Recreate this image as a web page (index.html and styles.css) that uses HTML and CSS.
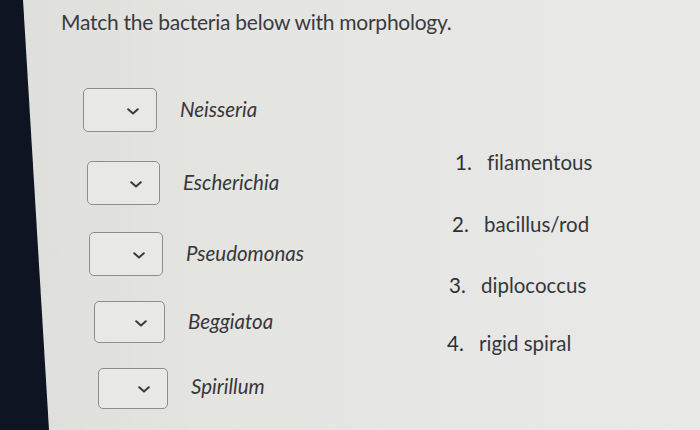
FILE: index.html
```html
<!DOCTYPE html>
<html lang="en">
<head>
<meta charset="utf-8">
<title>Match the bacteria</title>
<link rel="stylesheet" href="styles.css">
</head>
<body>
<div class="page">
  <div class="bezel"></div>
  <div class="content">
    <h1 class="title">Match the bacteria below with morphology.</h1>
    <div class="match">
      <div class="prompts">
        <div class="row">
          <div class="select"><svg class="chev" width="12" height="7" viewBox="0 0 12 7"><path d="M1.2 1.2 L6 5.6 L10.8 1.2" /></svg></div>
          <span class="label">Neisseria</span>
        </div>
        <div class="row">
          <div class="select"><svg class="chev" width="12" height="7" viewBox="0 0 12 7"><path d="M1.2 1.2 L6 5.6 L10.8 1.2" /></svg></div>
          <span class="label">Escherichia</span>
        </div>
        <div class="row">
          <div class="select"><svg class="chev" width="12" height="7" viewBox="0 0 12 7"><path d="M1.2 1.2 L6 5.6 L10.8 1.2" /></svg></div>
          <span class="label">Pseudomonas</span>
        </div>
        <div class="row">
          <div class="select"><svg class="chev" width="12" height="7" viewBox="0 0 12 7"><path d="M1.2 1.2 L6 5.6 L10.8 1.2" /></svg></div>
          <span class="label">Beggiatoa</span>
        </div>
        <div class="row">
          <div class="select"><svg class="chev" width="12" height="7" viewBox="0 0 12 7"><path d="M1.2 1.2 L6 5.6 L10.8 1.2" /></svg></div>
          <span class="label">Spirillum</span>
        </div>
      </div>
      <ol class="answers">
        <li class="answer"><span class="num">1.</span><span class="text">filamentous</span></li>
        <li class="answer"><span class="num">2.</span><span class="text">bacillus/rod</span></li>
        <li class="answer"><span class="num">3.</span><span class="text">diplococcus</span></li>
        <li class="answer"><span class="num">4.</span><span class="text">rigid spiral</span></li>
      </ol>
    </div>
  </div>
</div>
</body>
</html>
```

FILE: styles.css
```css
* { box-sizing: border-box; }
html, body { margin: 0; padding: 0; }
body {
  font-family: Lato, "Open Sans", "Liberation Sans", sans-serif;
  color: #35363a;
  font-variant-ligatures: none;
}
.page {
  position: relative;
  width: 700px;
  height: 430px;
  overflow: hidden;
  background: linear-gradient(90deg, #dededb 0%, #e4e4e1 30%, #e9e9e8 100%);
}
.bezel {
  position: absolute;
  left: 0;
  top: 0;
  width: 52px;
  height: 100%;
  background: #0e1422;
  clip-path: polygon(0 0, 23px 0, 49px 100%, 0 100%);
}
.content {
  padding: 9px 0 0 61px;
}
.title {
  margin: 0;
  font-size: 21px;
  letter-spacing: -0.25px;
  font-weight: 400;
  line-height: 26px;
  color: #3a3b3f;
}
.match {
  display: flex;
  align-items: flex-start;
}
.prompts {
  width: 386px;
  padding: 25px 0 0 22px;
  display: flex;
  flex-direction: column;
}
.row {
  display: flex;
  align-items: center;
  gap: 23px;
  height: 44px;
}
.row:nth-child(1) { margin-top: 28px; }
.row:nth-child(2) { margin-top: 29px; margin-left: 4px; }
.row:nth-child(3) { margin-top: 27px; margin-left: 6px; }
.row:nth-child(4) { margin-top: 24px; margin-left: 11px; }
.row:nth-child(5) { margin-top: 22px; margin-left: 15px; }
.select {
  flex: none;
  width: 74px;
  height: 44px;
  border: 1.5px solid #8d8d8b;
  border-radius: 5px;
  background: #e8e8e6;
  display: flex;
  align-items: center;
  justify-content: flex-end;
  padding-right: 17px;
}
.row:nth-child(2) .select { width: 73px; }
.row:nth-child(4) .select { width: 71px; height: 42px; }
.row:nth-child(5) .select { width: 70px; height: 41px; }
.chev { display: block; margin-top: 2px; }
.chev path {
  fill: none;
  stroke: #3b3c40;
  stroke-width: 2;
  stroke-linecap: round;
  stroke-linejoin: round;
}
.label {
  font-style: italic;
  font-size: 20.5px;
  color: #36373b;
  margin-top: -3px;
}
.row:nth-child(5) .label { margin-top: -5px; }
.answers {
  list-style: none;
  margin: 0;
  padding: 115px 0 0 0;
  display: flex;
  flex-direction: column;
}
.answer {
  display: flex;
  align-items: center;
  height: 24px;
  font-size: 20.5px;
  color: #36373b;
}
.answer:nth-child(1) { margin-left: 8px; }
.answer:nth-child(2) { margin-top: 38px; margin-left: 5px; }
.answer:nth-child(3) { margin-top: 37px; margin-left: 2px; }
.answer:nth-child(4) { margin-top: 34px; }
.num {
  width: 32px;
  color: #2f3034;
}
```
